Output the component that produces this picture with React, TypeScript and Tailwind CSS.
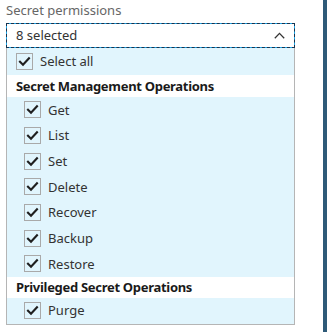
import { useState } from "react";

type Group = {
  title: string;
  items: string[];
};

const groups: Group[] = [
  {
    title: "Secret Management Operations",
    items: ["Get", "List", "Set", "Delete", "Recover", "Backup", "Restore"],
  },
  {
    title: "Privileged Secret Operations",
    items: ["Purge"],
  },
];

const CheckBox = ({ checked }: { checked: boolean }) => (
  <span className="flex h-[17px] w-[17px] shrink-0 items-center justify-center border border-[#a9a9a9]">
    {checked && (
      <svg width="13" height="13" viewBox="0 0 13 13" fill="none">
        <path
          d="M2 6.8 L5 9.8 L11 3.2"
          stroke="#1f1f1f"
          strokeWidth="2.1"
          strokeLinecap="square"
        />
      </svg>
    )}
  </span>
);

const ChevronUp = () => (
  <svg width="11" height="7" viewBox="0 0 11 7" fill="none">
    <path d="M0.8 6.2 L5.5 1.4 L10.2 6.2" stroke="#333" strokeWidth="1.3" />
  </svg>
);

export default function App() {
  const [selected] = useState<string[]>(groups.flatMap((g) => g.items));

  return (
    <div
      className="flex h-[332px] w-[327px] bg-white text-[13px] text-[#333]"
      style={{ fontFamily: '"Noto Sans", "Open Sans", sans-serif' }}
    >
      <div className="flex-1 pl-[6px] pt-[1px]">
        <div className="h-[22px] leading-[18px] text-[#666]">
          Secret permissions
        </div>

        <div className="w-[289px] border border-dashed border-[#17334f] bg-[#1ea3e4]">
          <div className="flex h-[23px] items-center justify-between bg-white pl-[9px] pr-[9px]">
            <span>{selected.length} selected</span>
            <ChevronUp />
          </div>
        </div>

        <div className="w-[289px] border border-t-0 border-[#b5b5b5]">
          <div className="flex h-[27px] items-center gap-[7px] bg-[#e1f5fd] pl-[9px]">
            <CheckBox checked />
            <span className="pt-[1px]">Select all</span>
          </div>

          {groups.map((group, i) => (
            <div key={group.title}>
              <div
                className={
                  i === 0
                    ? "flex h-[22px] items-center pl-[9px] pt-[1px] font-bold tracking-[-0.3px] text-[#1a1a1a]"
                    : "flex h-[21px] items-center pl-[9px] pt-[1px] font-bold tracking-[-0.3px] text-[#1a1a1a]"
                }
              >
                {group.title}
              </div>
              {group.items.map((item) => (
                <div
                  key={item}
                  className="flex h-[25.7px] items-center gap-[7px] bg-[#e1f5fd] pl-[17px]"
                >
                  <CheckBox checked={selected.includes(item)} />
                  <span className="pt-[1px]">{item}</span>
                </div>
              ))}
            </div>
          ))}
        </div>
      </div>
      <div className="w-[4px] bg-[#2e5a78]" />
    </div>
  );
}
